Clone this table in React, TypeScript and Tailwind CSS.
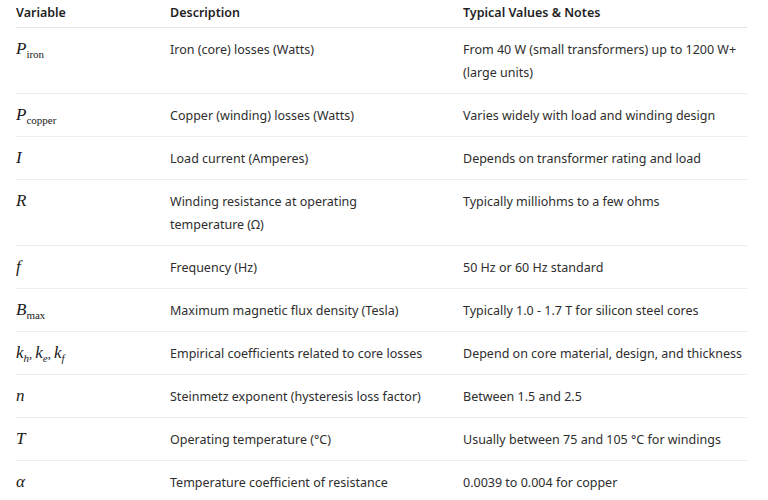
import React from 'react';

interface Row {
  variable: React.ReactNode;
  description: string;
  notes: string;
}

const Sym: React.FC<{ base: string; sub?: string; italicSub?: boolean }> = ({ base, sub, italicSub }) => (
  <span className="whitespace-nowrap">
    <span className="italic text-[17px]">{base}</span>
    {sub && (
      <span className={`text-[11px] relative top-[4px] ${italicSub ? 'italic' : ''}`}>{sub}</span>
    )}
  </span>
);

const rows: Row[] = [
  {
    variable: <Sym base="P" sub="iron" />,
    description: 'Iron (core) losses (Watts)',
    notes: 'From 40 W (small transformers) up to 1200 W+ (large units)',
  },
  {
    variable: <Sym base="P" sub="copper" />,
    description: 'Copper (winding) losses (Watts)',
    notes: 'Varies widely with load and winding design',
  },
  {
    variable: <Sym base="I" />,
    description: 'Load current (Amperes)',
    notes: 'Depends on transformer rating and load',
  },
  {
    variable: <Sym base="R" />,
    description: 'Winding resistance at operating temperature (Ω)',
    notes: 'Typically milliohms to a few ohms',
  },
  {
    variable: <Sym base="f" />,
    description: 'Frequency (Hz)',
    notes: '50 Hz or 60 Hz standard',
  },
  {
    variable: <Sym base="B" sub="max" />,
    description: 'Maximum magnetic flux density (Tesla)',
    notes: 'Typically 1.0 - 1.7 T for silicon steel cores',
  },
  {
    variable: (
      <span className="whitespace-nowrap">
        <Sym base="k" sub="h" italicSub />, <Sym base="k" sub="e" italicSub />, <Sym base="k" sub="f" italicSub />
      </span>
    ),
    description: 'Empirical coefficients related to core losses',
    notes: 'Depend on core material, design, and thickness',
  },
  {
    variable: <Sym base="n" />,
    description: 'Steinmetz exponent (hysteresis loss factor)',
    notes: 'Between 1.5 and 2.5',
  },
  {
    variable: <Sym base="T" />,
    description: 'Operating temperature (°C)',
    notes: 'Usually between 75 and 105 °C for windings',
  },
  {
    variable: <Sym base="α" />,
    description: 'Temperature coefficient of resistance',
    notes: '0.0039 to 0.004 for copper',
  },
];

const App: React.FC = () => {
  return (
    <div className="w-[768px] h-[500px] overflow-hidden bg-white text-[#2e2e2e] font-['Segoe_UI','Noto_Sans',sans-serif] text-[12.5px]">
      <div className="ml-[16px] w-[731px]">
        <div className="grid grid-cols-[154px_293px_284px] border-b border-[#e6e6e6] pt-[2px] pb-[3px] leading-[22px] font-semibold text-[#1f1f1f]">
          <div>Variable</div>
          <div>Description</div>
          <div>Typical Values &amp; Notes</div>
        </div>
        {rows.map((row, i) => (
          <div
            key={i}
            className="grid grid-cols-[154px_293px_284px] border-b border-[#ececec] py-[9.5px] leading-[23px]"
          >
            <div className="h-[23px] flex items-center font-['Liberation_Serif',serif] text-[#1a1a1a]">
              {row.variable}
            </div>
            <div className="pr-[35px]">{row.description}</div>
            <div>{row.notes}</div>
          </div>
        ))}
      </div>
    </div>
  );
};

export default App;
